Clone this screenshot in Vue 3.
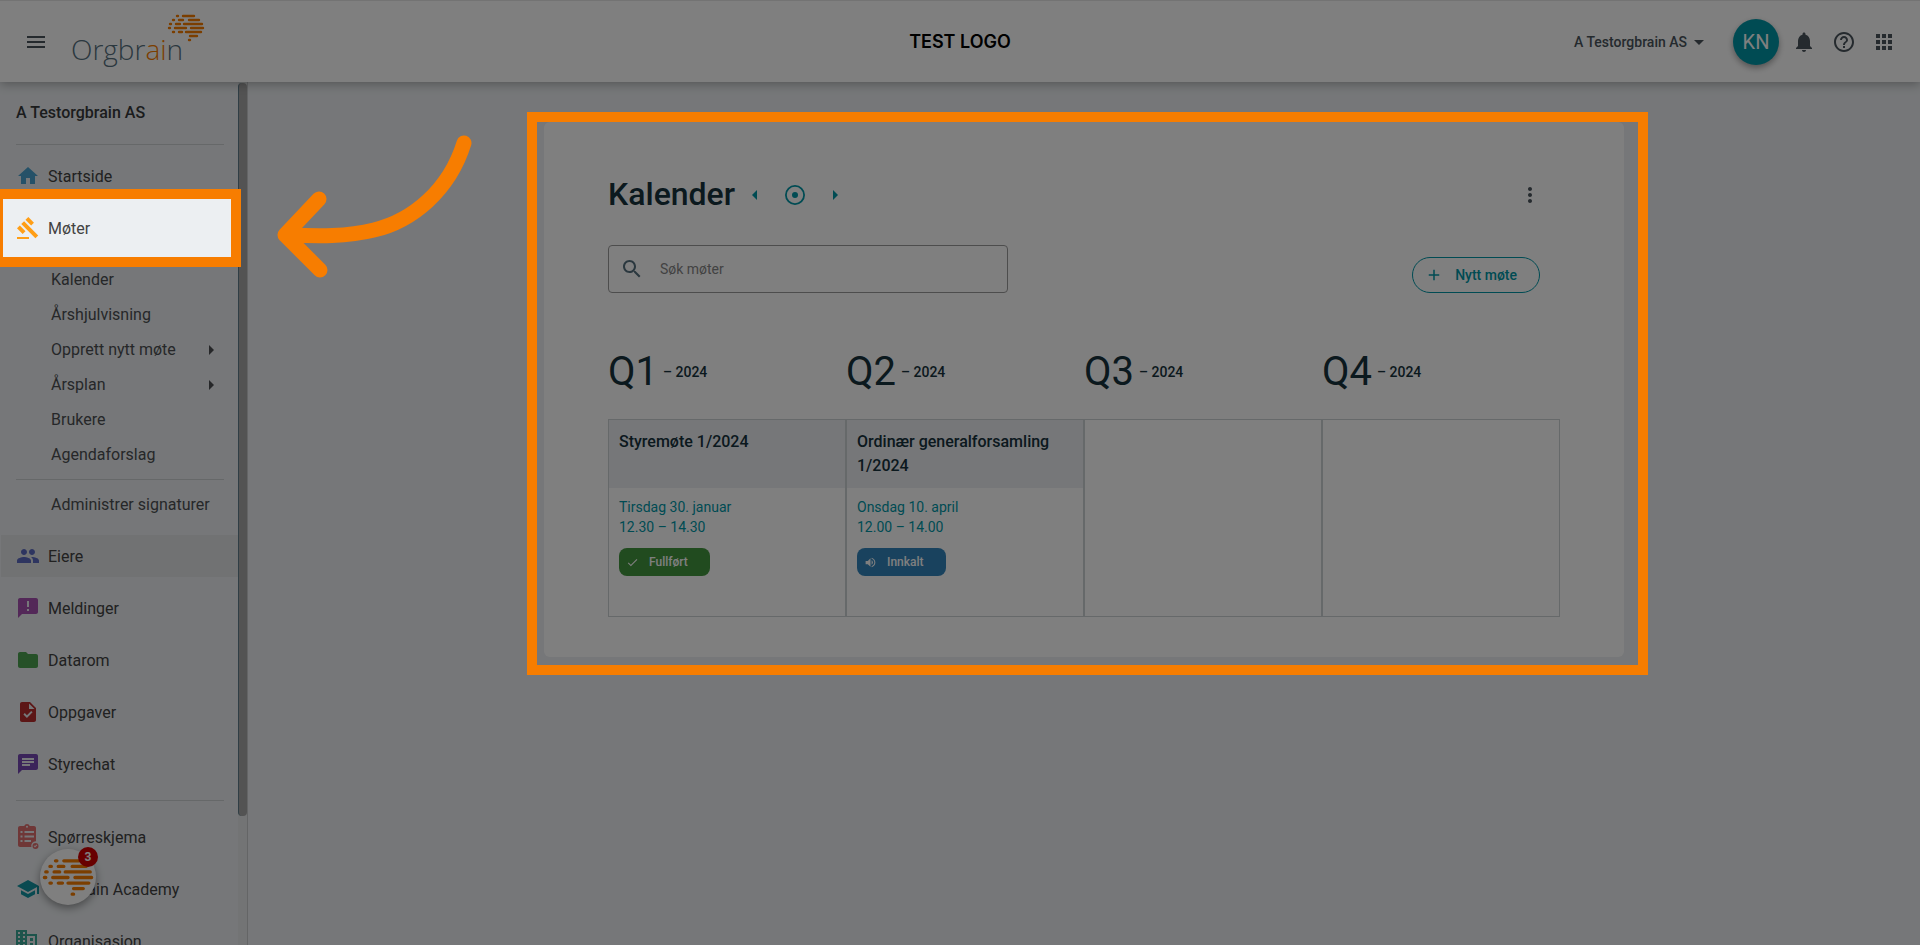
<script setup>
import {ref} from "vue";

const search = ref('');

// Each row of the brain mark: y, then the dashes as [from, to]
const brain = [
  {y: 2, dashes: [[9, 10], [15, 26]]},
  {y: 6, dashes: [[5, 6], [11, 15], [21, 31]]},
  {y: 10, dashes: [[2, 3], [8, 12], [16, 34]]},
  {y: 14, dashes: [[1, 2], [7, 18], [23, 35]]},
  {y: 18, dashes: [[5, 6], [11, 14], [18, 33]]},
  {y: 22, dashes: [[22, 29]]},
  {y: 26, dashes: [[21, 22]]},
];
const brainPath = brain
    .map((row) => row.dashes.map((d) => `M${d[0]} ${row.y}H${d[1]}`).join(''))
    .join('');

const mainItems = [
  {
    label: 'Startside', color: '#4aa3d0',
    icon: 'M10 20v-6h4v6h5v-8h3L12 3 2 12h3v8z'
  },
  {
    label: 'Møter', color: '#ff9e16',
    icon: 'M1 21h12v2H1zM5.245 8.07l2.83-2.827 14.14 14.142-2.828 2.828zM12.317 1l5.657 5.656-2.83 2.83-5.654-5.66zM3.825 9.485l5.657 5.657-2.828 2.828-5.657-5.657z'
  },
];

const subItems = [
  {label: 'Kalender'},
  {label: 'Årshjulvisning'},
  {label: 'Opprett nytt møte', more: true},
  {label: 'Årsplan', more: true},
  {label: 'Brukere'},
  {label: 'Agendaforslag'},
];

const toolItems = [
  {
    label: 'Eiere', color: '#5c6bc0', active: true,
    icon: 'M16 11c1.66 0 2.99-1.34 2.99-3S17.66 5 16 5c-1.66 0-3 1.34-3 3s1.34 3 3 3zm-8 0c1.66 0 2.99-1.34 2.99-3S9.66 5 8 5C6.34 5 5 6.34 5 8s1.34 3 3 3zm0 2c-2.33 0-7 1.17-7 3.5V19h14v-2.5c0-2.33-4.67-3.5-7-3.5zm8 0c-.29 0-.62.02-.97.05 1.16.84 1.97 1.97 1.97 3.45V19h6v-2.5c0-2.33-4.67-3.5-7-3.5z'
  },
  {
    label: 'Meldinger', color: '#a650b0',
    icon: 'M20 2H4c-1.1 0-1.99.9-1.99 2L2 22l4-4h14c1.1 0 2-.9 2-2V4c0-1.1-.9-2-2-2zm-7 13h-2v-2h2v2zm0-4h-2V5h2v6z'
  },
  {
    label: 'Datarom', color: '#4ca350',
    icon: 'M10 4H4c-1.1 0-1.99.9-1.99 2L2 18c0 1.1.9 2 2 2h16c1.1 0 2-.9 2-2V8c0-1.1-.9-2-2-2h-8l-2-2z'
  },
  {
    label: 'Oppgaver', color: '#b82c2c',
    icon: 'M14 2H6c-1.1 0-1.99.9-1.99 2L4 20c0 1.1.89 2 1.99 2H18c1.1 0 2-.9 2-2V8l-6-6zm-3.06 16L7.4 14.46l1.41-1.41 2.12 2.12 4.24-4.24 1.41 1.41L10.94 18zM13 9V3.5L18.5 9H13z'
  },
  {
    label: 'Styrechat', color: '#7648b4',
    icon: 'M20 2H4c-1.1 0-1.99.9-1.99 2L2 22l4-4h14c1.1 0 2-.9 2-2V4c0-1.1-.9-2-2-2zM6 9h12v2H6V9zm8 5H6v-2h8v2zm4-6H6V6h12v2z'
  },
];

const extraItems = [
  {
    label: 'Spørreskjema', color: '#df6f6f',
    icon: 'M4 1h4.2a3 3 0 0 1 5.6 0H18c1.1 0 2 .9 2 2v13.2a4.5 4.5 0 0 0-4.600 5.800H4c-1.100 0-2-.900-2-2V3c0-1.100.900-2 2-2zm7-.200a1 1 0 1 0 0 2 1 1 0 0 0 0-2zM4.500 6v2h2V6zm4 0v2H18V6zm-4 4.500v2h2v-2zm4 0v2H18v-2zm-4 4.500v2h2v-2zm4 0v2H15v-2zM19.500 18a3 3 0 1 1 0 6 3 3 0 0 1 0-6zm-.500 4.500l2.300-2.300-.700-.700-1.600 1.600-.700-.700-.700.700z'
  },
  {
    label: 'Orgbrain Academy', color: '#1395a3',
    icon: 'M5 13.18v4L12 21l7-3.82v-4L12 17l-7-3.82zM12 3L1 9l11 6 9-4.91V17h2V9L12 3z'
  },
  {
    label: 'Organisasjon', color: '#3aa898',
    icon: 'M0 1h11v4h10v17H0V1zm2 2v2h2V3H2zm5 0v2h2V3H7zM2 7v2h2V7H2zm5 0v2h2V7H7zm-5 4v2h2v-2H2zm5 0v2h2v-2H7zm-5 4v2h2v-2H2zm5 0v2h2v-2H7zm4-8v13h8V7h-8zm3 2h3v3h-3V9zm0 5h3v3h-3v-3z'
  },
];

const quarters = [
  {
    name: 'Q1', year: 2024,
    meeting: {
      title: 'Styremøte 1/2024', date: 'Tirsdag 30. januar', time: '12.30 – 14.30',
      status: 'Fullført', type: 'done',
      icon: 'M9 16.17L4.83 12l-1.42 1.41L9 19 21 7l-1.41-1.41z'
    }
  },
  {
    name: 'Q2', year: 2024,
    meeting: {
      title: 'Ordinær generalforsamling 1/2024', date: 'Onsdag 10. april', time: '12.00 – 14.00',
      status: 'Innkalt', type: 'called',
      icon: 'M3 9v6h4l5 5V4L7 9H3zm13.5 3c0-1.77-1.02-3.29-2.5-4.03v8.05c1.48-.73 2.5-2.25 2.5-4.02zM14 3.23v2.06c2.89.86 5 3.54 5 6.71s-2.11 5.85-5 6.71v2.06c4.01-.91 7-4.49 7-8.77s-2.99-7.86-7-8.77z'
    }
  },
  {name: 'Q3', year: 2024},
  {name: 'Q4', year: 2024},
];
</script>

<template>
  <div class="page">
    <header class="topbar">
      <div class="topleft">
        <button class="iconbtn" aria-label="Meny">
          <svg viewBox="0 0 24 24"><path d="M3 18h18v-2H3v2zm0-5h18v-2H3v2zm0-7v2h18V6H3z"/></svg>
        </button>
        <a href="#" class="logo">
          <span class="logotext">Orgbr<b>ai</b>n</span>
          <svg class="logobrain" viewBox="0 0 36 28"><path :d="brainPath"/></svg>
        </a>
      </div>
      <div class="brand">TEST LOGO</div>
      <div class="topright">
        <button class="company">
          A Testorgbrain AS
          <svg viewBox="0 0 24 24"><path d="M7 10l5 5 5-5z"/></svg>
        </button>
        <button class="avatar">KN</button>
        <button class="iconbtn" aria-label="Varsler">
          <svg viewBox="0 0 24 24"><path d="M12 22c1.1 0 2-.9 2-2h-4c0 1.1.89 2 2 2zm6-6v-5c0-3.07-1.64-5.64-4.5-6.32V4c0-.83-.67-1.5-1.5-1.5s-1.5.67-1.5 1.5v.68C7.63 5.36 6 7.92 6 11v5l-2 2v1h16v-1l-2-2z"/></svg>
        </button>
        <button class="iconbtn" aria-label="Hjelp">
          <svg viewBox="0 0 24 24"><path d="M11 18h2v-2h-2v2zm1-16C6.48 2 2 6.48 2 12s4.48 10 10 10 10-4.48 10-10S17.52 2 12 2zm0 18c-4.41 0-8-3.59-8-8s3.59-8 8-8 8 3.59 8 8-3.59 8-8 8zm0-14c-2.21 0-4 1.79-4 4h2c0-1.1.9-2 2-2s2 .9 2 2c0 2-3 1.75-3 5h2c0-2.25 3-2.5 3-5 0-2.21-1.79-4-4-4z"/></svg>
        </button>
        <button class="iconbtn" aria-label="Apper">
          <svg viewBox="0 0 24 24"><path d="M4 8h4V4H4v4zm6 12h4v-4h-4v4zm-6 0h4v-4H4v4zm0-6h4v-4H4v4zm6 0h4v-4h-4v4zm6-10v4h4V4h-4zm-6 4h4V4h-4v4zm6 6h4v-4h-4v4zm0 6h4v-4h-4v4z"/></svg>
        </button>
      </div>
    </header>

    <div class="body">
      <aside class="sidebar">
        <nav class="menu">
          <h2>A Testorgbrain AS</h2>
          <hr>
          <a v-for="item in mainItems" :key="item.label" href="#" class="item">
            <svg viewBox="0 0 24 24" :style="{fill: item.color}"><path :d="item.icon"/></svg>
            {{ item.label }}
          </a>
          <div class="submenu">
            <a v-for="item in subItems" :key="item.label" href="#" class="subitem">
              {{ item.label }}
              <svg v-if="item.more" viewBox="0 0 24 24"><path d="M10 17l5-5-5-5v10z"/></svg>
            </a>
            <hr>
            <a href="#" class="subitem">Administrer signaturer</a>
          </div>
          <a v-for="item in toolItems" :key="item.label" href="#" class="item" :class="{'active' : item.active}">
            <svg viewBox="0 0 24 24" :style="{fill: item.color}"><path :d="item.icon"/></svg>
            {{ item.label }}
          </a>
          <hr class="wide">
          <a v-for="item in extraItems" :key="item.label" href="#" class="item">
            <svg viewBox="0 0 24 24" :style="{fill: item.color}"><path fill-rule="evenodd" :d="item.icon"/></svg>
            {{ item.label }}
          </a>
        </nav>
        <div class="track">
          <div class="thumb"></div>
        </div>
      </aside>

      <main>
        <div class="cardwrap">
          <section class="card">
            <div class="titlerow">
              <h1>Kalender</h1>
              <button class="iconbtn teal" aria-label="Forrige">
                <svg viewBox="0 0 24 24"><path d="M14 7l-5 5 5 5V7z"/></svg>
              </button>
              <button class="iconbtn teal" aria-label="I dag">
                <svg viewBox="0 0 24 24"><path fill-rule="evenodd" d="M12 2a10 10 0 1 0 0 20 10 10 0 0 0 0-20zm0 1.8a8.2 8.2 0 1 1 0 16.4 8.2 8.2 0 0 1 0-16.4zM12 9a3 3 0 1 1 0 6 3 3 0 0 1 0-6z"/></svg>
              </button>
              <button class="iconbtn teal" aria-label="Neste">
                <svg viewBox="0 0 24 24"><path d="M10 17l5-5-5-5v10z"/></svg>
              </button>
              <button class="iconbtn kebab" aria-label="Flere valg">
                <svg viewBox="0 0 24 24"><path d="M12 8c1.1 0 2-.9 2-2s-.9-2-2-2-2 .9-2 2 .9 2 2 2zm0 2c-1.1 0-2 .9-2 2s.9 2 2 2 2-.9 2-2-.9-2-2-2zm0 6c-1.1 0-2 .9-2 2s.9 2 2 2 2-.9 2-2-.9-2-2-2z"/></svg>
              </button>
            </div>

            <div class="toolrow">
              <label class="search">
                <svg viewBox="0 0 24 24"><path d="M15.5 14h-.79l-.28-.27C15.41 12.59 16 11.11 16 9.5 16 5.91 13.09 3 9.5 3S3 5.91 3 9.5 5.91 16 9.5 16c1.61 0 3.09-.59 4.23-1.57l.27.28v.79l5 4.99L20.49 19l-4.99-5zm-6 0C7.01 14 5 11.99 5 9.5S7.01 5 9.5 5 14 7.01 14 9.5 11.99 14 9.5 14z"/></svg>
                <input type="text" v-model="search" placeholder="Søk møter" aria-label="Søk møter">
              </label>
              <button class="newbtn">
                <svg viewBox="0 0 24 24"><path d="M19 13h-6v6h-2v-6H5v-2h6V5h2v6h6v2z"/></svg>
                Nytt møte
              </button>
            </div>

            <table class="calendar">
              <thead>
                <tr>
                  <th v-for="q in quarters" :key="q.name" scope="col">
                    <div class="quarter"><span>{{ q.name }}</span><small>– {{ q.year }}</small></div>
                  </th>
                </tr>
              </thead>
              <tbody>
                <tr>
                  <td v-for="q in quarters" :key="q.name">
                    <template v-if="q.meeting">
                      <h3>{{ q.meeting.title }}</h3>
                      <div class="meeting">
                        <p>{{ q.meeting.date }}</p>
                        <p>{{ q.meeting.time }}</p>
                        <span class="status" :class="q.meeting.type">
                          <svg viewBox="0 0 24 24"><path :d="q.meeting.icon"/></svg>
                          {{ q.meeting.status }}
                        </span>
                      </div>
                    </template>
                  </td>
                </tr>
              </tbody>
            </table>
          </section>
          <div class="frame"></div>
        </div>
      </main>
    </div>

    <button class="bubble" aria-label="Hjelpesenter">
      <svg viewBox="0 0 36 28"><path :d="brainPath"/></svg>
      <span class="count">3</span>
    </button>

    <!-- dims everything outside the highlighted menu item -->
    <div class="spotlight"></div>
    <svg class="arrow" viewBox="0 0 200 150">
      <path d="M189 18C174 66 137 96 99 105C71 112 43 111 10 110M44 74L10 110L45 145"/>
    </svg>
  </div>
</template>

<style>
body {
  margin: 0;
}
</style>

<style scoped>
.page {
  --orange: #f77d00;
  --bg: #eceff2;
  --teal: #0097a7;
  position: relative;
  display: flex;
  flex-direction: column;
  height: 100vh;
  overflow: hidden;
  background: var(--bg);
  color: #424242;
  font-family: Roboto, "Liberation Sans", sans-serif;
  font-size: 16px;
}

.page * {
  box-sizing: border-box;
}

button {
  background: none;
  border: none;
  padding: 0;
  font: inherit;
  color: inherit;
  cursor: pointer;
}

a {
  color: inherit;
  text-decoration: none;
}

svg {
  width: 24px;
  height: 24px;
  fill: currentColor;
  flex-shrink: 0;
  overflow: visible;
}

.topbar {
  position: relative;
  z-index: 2;
  display: grid;
  grid-template-columns: 1fr auto 1fr;
  align-items: center;
  height: 82px;
  flex-shrink: 0;
  padding: 0 16px;
  background: #fff;
  border-top: 1px solid #e6e6e6;
  box-shadow: 0 2px 10px rgba(0, 0, 0, 0.3);
}

.topleft, .topright {
  display: flex;
  align-items: center;
}

.topright {
  justify-content: flex-end;
  color: #4a545c;
}

.iconbtn {
  display: flex;
  align-items: center;
  justify-content: center;
  width: 40px;
  height: 40px;
  color: #4a545c;
}

.teal {
  color: var(--teal);
}

.logo {
  display: flex;
  align-items: flex-start;
  height: 56px;
  margin-left: 15px;
  color: #56707e;
}

.logotext {
  padding-top: 15px;
  font-family: "Open Sans", sans-serif;
  font-size: 28px;
  font-weight: 300;
  line-height: 40px;
}

.logotext b {
  font-weight: 300;
  color: var(--orange);
}

.logobrain {
  width: 36px;
  height: 28px;
  margin-left: -15px;
}

.logobrain path, .bubble path {
  fill: none;
  stroke: var(--orange);
  stroke-width: 2.4;
  stroke-linecap: round;
}

.brand {
  color: #000;
  font-family: Inter, sans-serif;
  font-size: 18px;
  font-weight: 600;
}

.company {
  display: flex;
  align-items: center;
  margin-right: 22px;
  font-size: 14px;
  font-weight: 500;
}

.avatar {
  width: 46px;
  height: 46px;
  margin-right: 5px;
  border-radius: 50%;
  background: var(--teal);
  color: #fff;
  font-size: 20px;
  box-shadow: 0 3px 6px rgba(0, 0, 0, 0.35);
}

.body {
  display: flex;
  flex: 1;
  min-height: 0;
}

.sidebar {
  display: flex;
  width: 248px;
  flex-shrink: 0;
  overflow: hidden;
}

.menu {
  display: flex;
  flex-direction: column;
  flex: 1;
}

.menu > * {
  flex-shrink: 0;
}

.menu h2 {
  margin: 0;
  padding: 0 16px;
  font-size: 16px;
  font-weight: 500;
  line-height: 62px;
  color: #37393b;
}

hr {
  height: 1px;
  margin: 0 14px 5px 16px;
  border: none;
  background: #cdd1d3;
}

.submenu hr {
  margin: 7px 14px 7px 16px;
}

hr.wide {
  margin: 10px 14px 10px 16px;
}

.item {
  display: flex;
  align-items: center;
  gap: 8px;
  height: 42px;
  margin: 5px 0 5px 1px;
  padding-left: 15px;
}

.active {
  background: #e3e5e7;
}

.submenu {
  padding: 8px 0;
}

.subitem {
  display: flex;
  align-items: center;
  justify-content: space-between;
  height: 35px;
  padding: 0 15px 0 51px;
  color: #4c4f52;
}

.track {
  width: 10px;
  padding-top: 1px;
  background: #e6e9eb;
  border-right: 1px solid #c8cbcd;
}

.thumb {
  height: 85%;
  background: #a6a6a6;
  border-left: 1px solid #607d8b;
  border-radius: 4px;
}

main {
  flex: 1;
  padding: 40px 24px;
}

.cardwrap {
  position: relative;
  max-width: 1080px;
  margin: 0 auto;
}

.card {
  padding: 53px 64px 40px;
  background: #fff;
  border-radius: 6px;
  color: #16323d;
}

.frame {
  position: absolute;
  inset: -10px -24px -18px -17px;
  z-index: 20;
  border: 10px solid var(--orange);
  pointer-events: none;
}

.titlerow {
  display: flex;
  align-items: center;
}

.titlerow h1 {
  margin: 0;
  font-size: 32px;
  font-weight: 500;
  line-height: 38px;
  align-self: flex-start;
}

.kebab {
  margin: 0 10px 0 auto;
}

.toolrow {
  display: flex;
  align-items: flex-end;
  justify-content: space-between;
  margin-top: 30px;
}

.search {
  display: flex;
  align-items: center;
  gap: 16px;
  width: 400px;
  height: 48px;
  padding: 0 11px;
  border: 1px solid #9a9a9a;
  border-radius: 4px;
  color: #56707e;
}

.search input {
  flex: 1;
  min-width: 0;
  padding: 0;
  border: none;
  outline: none;
  background: none;
  font: inherit;
  font-size: 14px;
}

.search input::placeholder {
  color: #858585;
  opacity: 1;
}

.newbtn {
  display: flex;
  align-items: center;
  gap: 12px;
  height: 36px;
  margin-right: 20px;
  padding: 0 22px 0 12px;
  border: 1px solid var(--teal);
  border-radius: 18px;
  color: var(--teal);
  font-size: 14px;
  font-weight: 500;
}

.newbtn svg {
  width: 18px;
  height: 18px;
}

.calendar {
  width: 100%;
  margin-top: 49px;
  table-layout: fixed;
  border-spacing: 0;
}

.calendar th {
  padding: 0 0 17px;
  text-align: left;
}

.quarter {
  display: flex;
  align-items: center;
  gap: 5px;
  font-size: 40px;
  font-weight: 400;
  line-height: 60px;
}

.quarter small {
  font-size: 14px;
  font-weight: 500;
}

.calendar td {
  height: 198px;
  padding: 0;
  border: 1px solid #ccd2d5;
  vertical-align: top;
}

.calendar h3 {
  min-height: 68px;
  margin: 0;
  padding: 10px 10px;
  background: var(--bg);
  font-size: 16px;
  font-weight: 500;
  line-height: 24px;
}

.meeting {
  padding: 9px 10px;
}

.meeting p {
  margin: 0;
  color: var(--teal);
  font-size: 14px;
  line-height: 20px;
}

.status {
  display: inline-flex;
  align-items: center;
  gap: 10px;
  height: 28px;
  margin-top: 11px;
  padding: 0 22px 0 7px;
  border-radius: 8px;
  color: #fff;
  font-size: 12px;
  font-weight: 500;
}

.status svg {
  width: 13px;
  height: 13px;
}

.done {
  background: #43963f;
}

.called {
  background: #3285bd;
}

.bubble {
  position: absolute;
  left: 40px;
  bottom: 40px;
  z-index: 5;
  display: flex;
  align-items: center;
  justify-content: center;
  width: 56px;
  height: 56px;
  border-radius: 50%;
  background: #fff;
  box-shadow: 0 3px 8px rgba(0, 0, 0, 0.4);
}

.bubble svg {
  width: 50px;
  height: 39px;
}

.count {
  position: absolute;
  top: -2px;
  right: -2px;
  width: 20px;
  height: 20px;
  border-radius: 50%;
  background: #d00000;
  color: #fff;
  font-size: 12px;
  font-weight: 700;
  line-height: 20px;
}

.spotlight {
  position: absolute;
  top: 189px;
  left: -7px;
  z-index: 10;
  width: 248px;
  height: 78px;
  box-sizing: border-box;
  border: 10px solid var(--orange);
  box-shadow: 0 0 0 9999px rgba(0, 0, 0, 0.5);
  pointer-events: none;
}

.arrow {
  position: absolute;
  top: 125px;
  left: 275px;
  z-index: 20;
  width: 200px;
  height: 150px;
  fill: none;
  stroke: var(--orange);
  stroke-width: 15;
  stroke-linecap: round;
  stroke-linejoin: round;
  pointer-events: none;
}
</style>
